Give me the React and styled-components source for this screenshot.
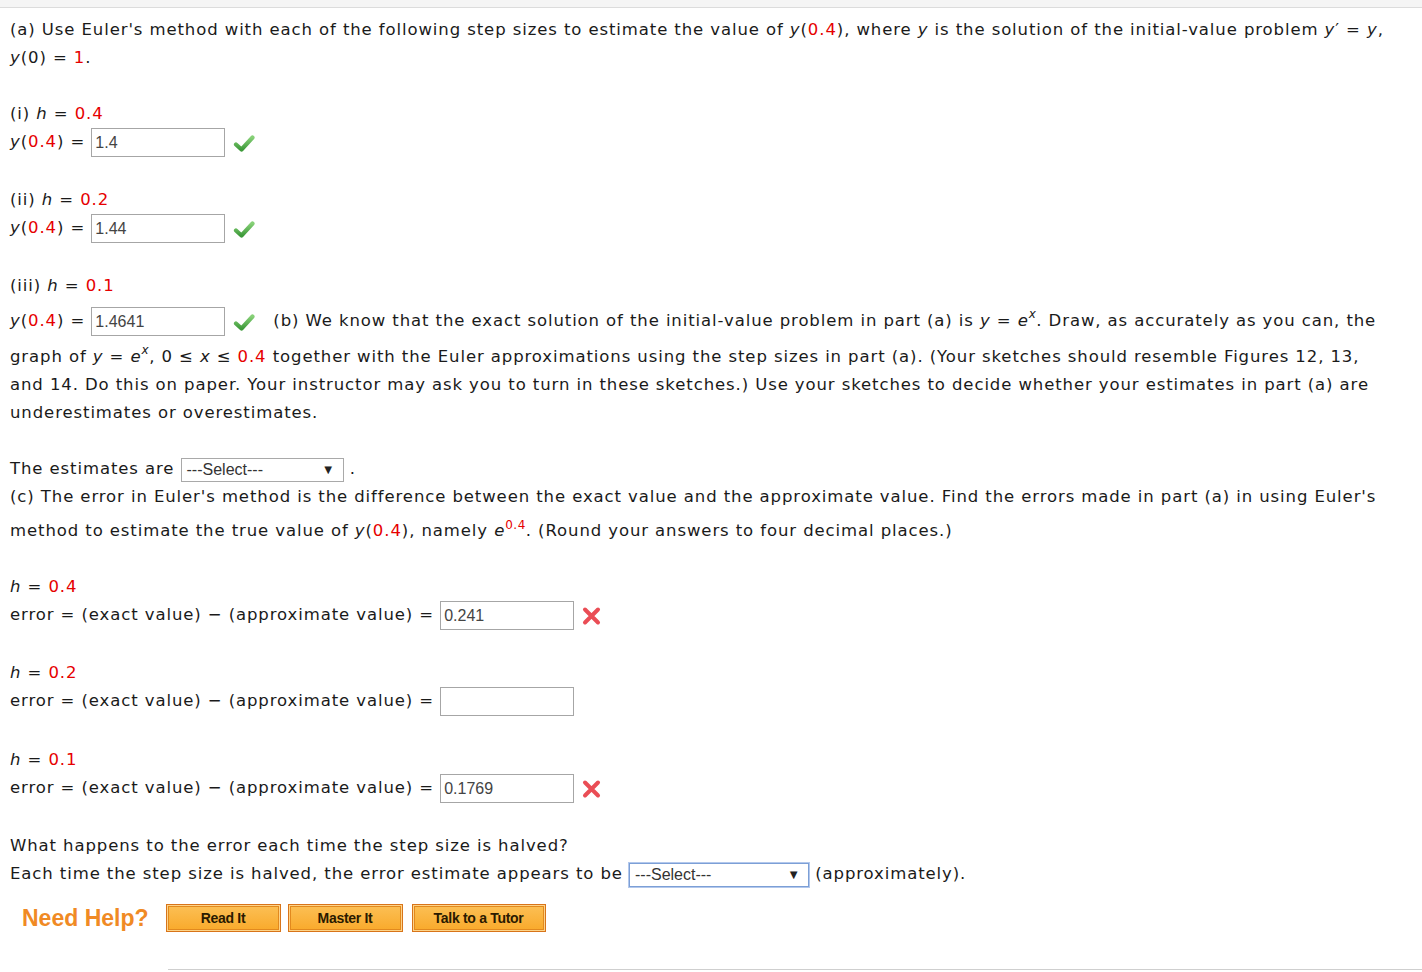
import React from "react";
import styled, { createGlobalStyle } from "styled-components";

const GlobalStyle = createGlobalStyle`
  body {
    margin: 0;
    background: #fff;
    color: #1a1a1a;
    font-family: "DejaVu Sans", Verdana, sans-serif;
    font-size: 16.5px;
    letter-spacing: 0.9px;
  }
`;

const TopBar = styled.div`
  height: 7px;
  background: #f5f5f5;
  border-bottom: 1px solid #dcdcdc;
`;

const Content = styled.div`
  padding: 8px 30px 0 10px;
`;

const Line = styled.div`
  line-height: 28px;
`;

const Gap = styled.div`
  height: ${(p) => p.$h || 28}px;
`;

const Red = styled.span`
  color: #e60000;
`;

const V = styled.i`
  font-style: italic;
`;

const Sup = styled.sup`
  font-size: 12px;
  letter-spacing: 0.5px;
  vertical-align: ${(p) => p.$up || 8}px;
  line-height: ${(p) => (p.$grow ? "28px" : "0")};
`;

const AnswerInput = styled.span`
  display: inline-block;
  box-sizing: border-box;
  width: ${(p) => p.$w || 134}px;
  height: 29px;
  border: 1px solid #a6a6a6;
  padding: 0 3px;
  vertical-align: middle;
  font-family: "Liberation Sans", Arial, sans-serif;
  font-size: 16px;
  letter-spacing: 0;
  line-height: 27px;
  color: #444;
  margin: ${(p) => p.$m || "0"};
`;

const SelectBox = styled.span`
  display: inline-flex;
  align-items: center;
  justify-content: space-between;
  box-sizing: border-box;
  width: ${(p) => p.$w}px;
  height: 24px;
  padding: 0 8px 0 5px;
  border: 1px solid ${(p) => (p.$focus ? "#7c9fd6" : "#a9a9a9")};
  box-shadow: ${(p) => (p.$focus ? "0 0 0 1px #b3c8ec" : "none")};
  vertical-align: middle;
  font-family: "Liberation Sans", Arial, sans-serif;
  font-size: 16px;
  letter-spacing: 0;
  color: #333;
  background: #fff;
  span {
    font-size: 13px;
    color: #222;
  }
`;

const IconWrap = styled.span`
  display: inline-block;
  vertical-align: middle;
  width: 22px;
  height: 20px;
  margin: 0 ${(p) => p.$mr || 0}px 0 ${(p) => p.$ml || 8}px;
  svg {
    display: block;
  }
`;

const Check = (props) => (
  <IconWrap {...props}>
    <svg width="22" height="20" viewBox="0 0 22 20">
      <defs>
        <linearGradient id="cg" x1="0" y1="0" x2="0" y2="1">
          <stop offset="0" stopColor="#86d077" />
          <stop offset="1" stopColor="#3e9a3a" />
        </linearGradient>
      </defs>
      <path
        d="M3 11.5 L8.5 16.5 L19.5 4.5"
        fill="none"
        stroke="url(#cg)"
        strokeWidth="4.2"
        strokeLinecap="round"
        strokeLinejoin="round"
      />
    </svg>
  </IconWrap>
);

const Cross = (props) => (
  <IconWrap {...props}>
    <svg width="22" height="20" viewBox="0 0 22 20">
      <path
        d="M4 3.5 L17 16.5 M17 3.5 L4 16.5"
        fill="none"
        stroke="#ea4d55"
        strokeWidth="4"
        strokeLinecap="round"
      />
    </svg>
  </IconWrap>
);

const HelpRow = styled.div`
  display: flex;
  align-items: center;
  gap: 7px;
  padding-left: 22px;
  height: 40px;
`;

const HelpLabel = styled.span`
  font-family: "Liberation Sans", Arial, sans-serif;
  font-weight: bold;
  font-size: 23px;
  letter-spacing: 0;
  color: #f08a24;
  margin-right: 10px;
`;

const HelpButton = styled.span`
  box-sizing: border-box;
  display: inline-flex;
  align-items: center;
  justify-content: center;
  width: ${(p) => p.$w}px;
  height: 28px;
  margin-left: ${(p) => p.$ml || 0}px;
  background: linear-gradient(#fcc056, #f9a92a);
  border: 1px solid #d8741a;
  box-shadow: inset 0 0 0 1px #fdd48a, inset 0 0 0 2px #e2891e;
  font-family: "Liberation Sans", Arial, sans-serif;
  font-weight: bold;
  font-size: 14px;
  color: #2a1a00;
  letter-spacing: -0.3px;
`;

const BottomRule = styled.div`
  margin: 31px 0 0 168px;
  border-top: 1px solid #cfcfcf;
  height: 2px;
`;

const ErrorRow = ({ value, wrong }) => (
  <Line>
    error = (exact value) − (approximate value) ={" "}
    <AnswerInput $w={134}>{value}</AnswerInput>
    {wrong && <Cross $ml={7} />}
  </Line>
);

export default function App() {
  return (
    <>
      <GlobalStyle />
      <TopBar />
      <Content>
        <Line>
          (a) Use Euler's method with each of the following step sizes to
          estimate the value of <V>y</V>(<Red>0.4</Red>), where <V>y</V> is the
          solution of the initial-value problem <V>y</V>′ = <V>y</V>,{" "}
        </Line>
        <Line>
          <V>y</V>(0) = <Red>1</Red>.
        </Line>
        <Gap />
        <Line>
          (i) <V>h</V> = <Red>0.4</Red>
        </Line>
        <Line>
          <V>y</V>(<Red>0.4</Red>) = <AnswerInput>1.4</AnswerInput>
          <Check />
        </Line>
        <Gap $h={29} />
        <Line>
          (ii) <V>h</V> = <Red>0.2</Red>
        </Line>
        <Line>
          <V>y</V>(<Red>0.4</Red>) = <AnswerInput>1.44</AnswerInput>
          <Check />
        </Line>
        <Gap $h={29} />
        <Line>
          (iii) <V>h</V> = <Red>0.1</Red>
        </Line>
        <Line>
          <V>y</V>(<Red>0.4</Red>) ={" "}
          <AnswerInput $m="7px 0">1.4641</AnswerInput>
          <Check $mr={18} />
          (b) We know that the exact solution of the initial-value problem in
          part (a) is <V>y</V> = <V>e</V>
          <Sup>
            <V>x</V>
          </Sup>
          . Draw, as accurately as you can, the graph of <V>y</V> ={" "}
          <V>e</V>
          <Sup>
            <V>x</V>
          </Sup>
          , 0 ≤ <V>x</V> ≤ <Red>0.4</Red> together with the Euler
          approximations using the step sizes in part (a). (Your sketches
          should resemble Figures 12, 13, and 14. Do this on paper. Your
          instructor may ask you to turn in these sketches.) Use your sketches
          to decide whether your estimates in part (a) are underestimates or
          overestimates.
        </Line>
        <Gap />
        <Line>
          The estimates are{" "}
          <SelectBox $w={163}>
            ---Select---<span>▼</span>
          </SelectBox>{" "}
          .
        </Line>
        <Line>
          (c) The error in Euler's method is the difference between the exact
          value and the approximate value. Find the errors made in part (a) in
          using Euler's method to estimate the true value of <V>y</V>(
          <Red>0.4</Red>), namely <V>e</V>
          <Sup $up={7} $grow>
            <Red>0.4</Red>
          </Sup>
          . (Round your answers to four decimal places.)
        </Line>
        <Gap />
        <Line>
          <V>h</V> = <Red>0.4</Red>
        </Line>
        <ErrorRow value="0.241" wrong />
        <Gap $h={29} />
        <Line>
          <V>h</V> = <Red>0.2</Red>
        </Line>
        <ErrorRow value="" />
        <Gap $h={30} />
        <Line>
          <V>h</V> = <Red>0.1</Red>
        </Line>
        <ErrorRow value="0.1769" wrong />
        <Gap $h={29} />
        <Line>What happens to the error each time the step size is halved?</Line>
        <Line>
          Each time the step size is halved, the error estimate appears to be{" "}
          <SelectBox $w={180} $focus>
            ---Select---<span>▼</span>
          </SelectBox>{" "}
          (approximately).
        </Line>
        <Gap $h={10} />
      </Content>
      <HelpRow>
        <HelpLabel>Need Help?</HelpLabel>
        <HelpButton $w={115}>Read It</HelpButton>
        <HelpButton $w={115}>Master It</HelpButton>
        <HelpButton $w={134} $ml={2}>
          Talk to a Tutor
        </HelpButton>
      </HelpRow>
      <BottomRule />
    </>
  );
}
